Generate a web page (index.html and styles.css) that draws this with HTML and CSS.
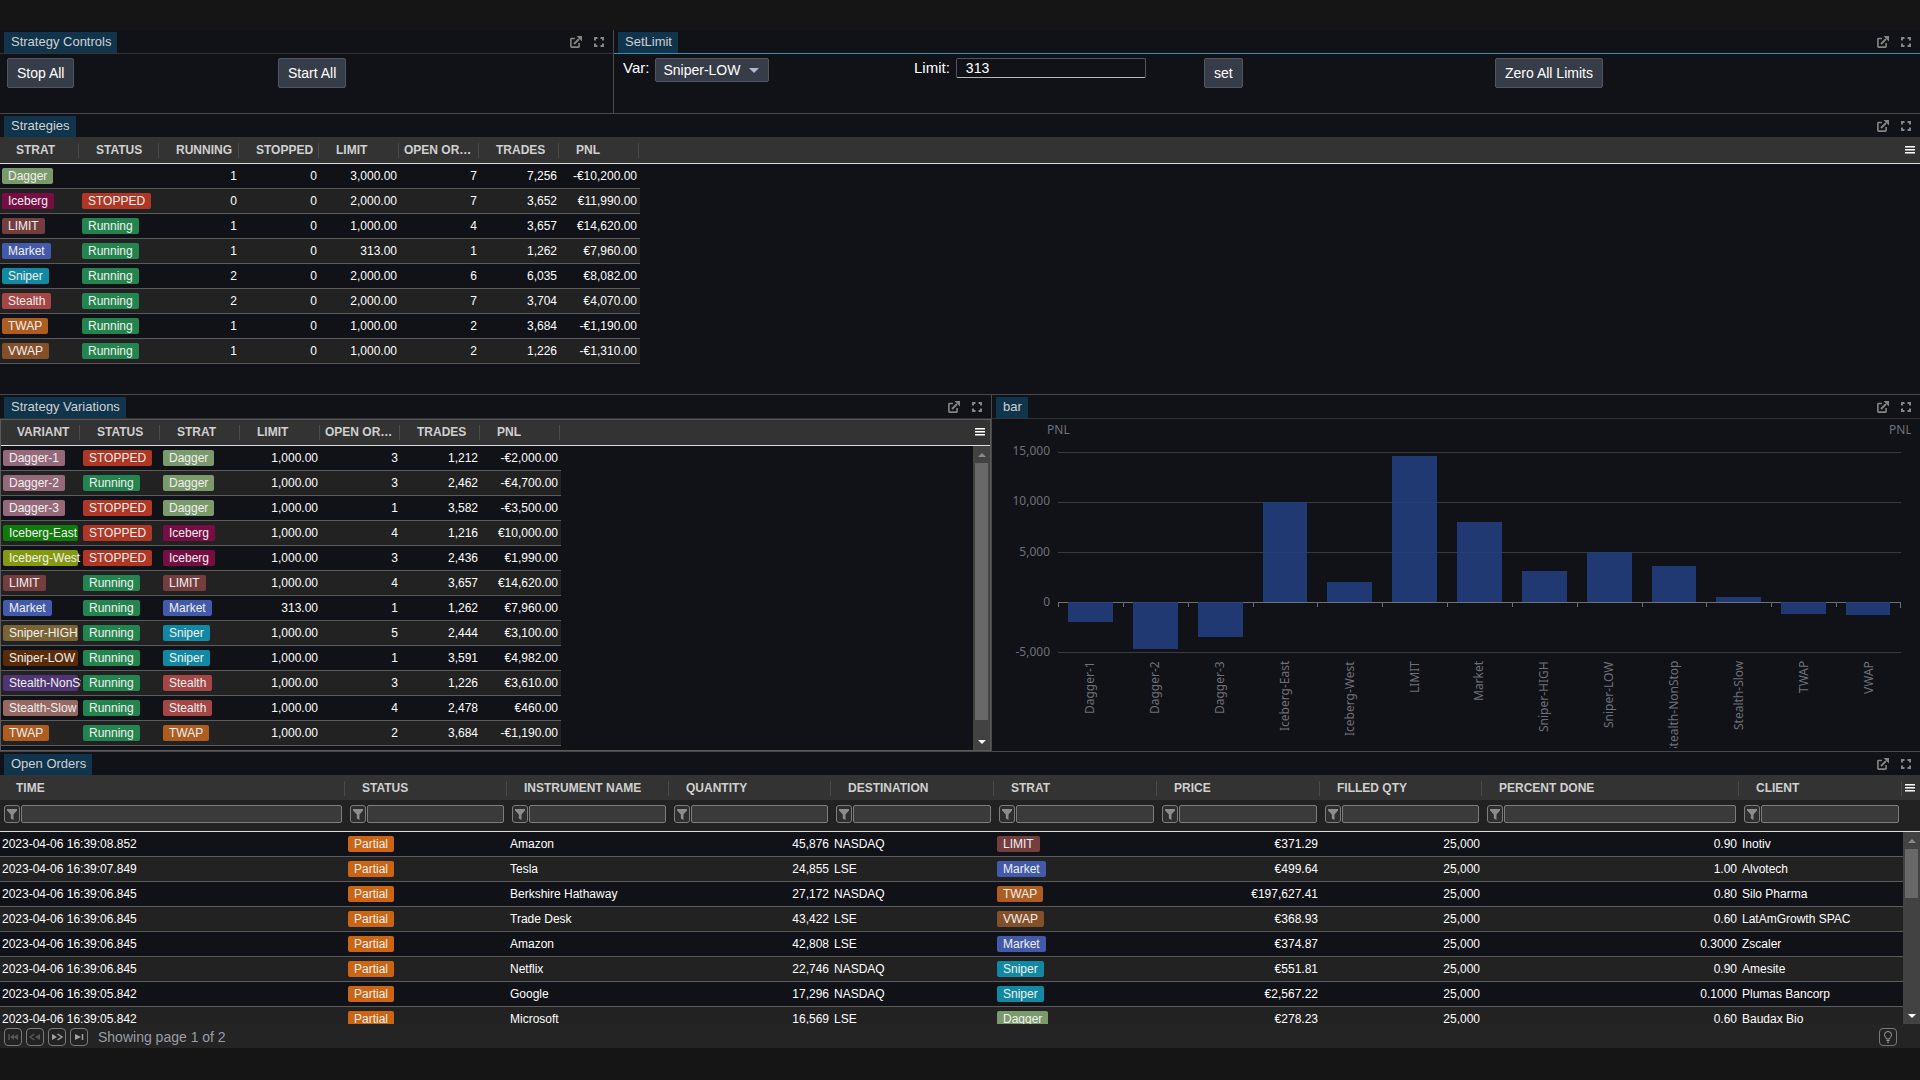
FILE: index.html
```html
<!DOCTYPE html>
<html lang="en">
<head>
<meta charset="utf-8">
<title>Strategy Dashboard</title>
<link rel="stylesheet" href="styles.css">
</head>
<body>
<svg class="sprite" aria-hidden="true">
  <symbol id="popout" viewBox="0 0 12 12"><path d="M5 2.5H1.5a.6.6 0 0 0-.6.6v7.4a.6.6 0 0 0 .6.6h7a.6.6 0 0 0 .6-.6V7" fill="none" stroke="currentColor" stroke-width="1.6"/><path d="M4 8l5-5" fill="none" stroke="currentColor" stroke-width="2"/><path d="M6.5 0H12v5.5z" fill="currentColor"/></symbol>
  <symbol id="expand" viewBox="0 0 12 12"><path d="M2 4.5V2h2.5M7.500 2H10v2.500M10 7.500V10H7.500M4.500 10H2V7.500" fill="none" stroke="currentColor" stroke-width="2"/></symbol>
  <symbol id="bars" viewBox="0 0 10 8"><path d="M0 .5h10M0 3.500h10M0 6.500h10" stroke="#fff"/><path d="M0 1.500h10M0 4.500h10M0 7.500h10" stroke="#a0a0a0"/></symbol>
  <symbol id="funnel" viewBox="0 0 10 11"><path d="M0 0h10v1.500L6.500 5.500V11L3.800 9.500v-4L0 1.500z" fill="currentColor"/></symbol>
  <symbol id="first" viewBox="0 0 12 8"><path d="M2 1v6" stroke="currentColor" stroke-width="1.500"/><path d="M7 1v6L3 4z" fill="currentColor"/><path d="M11 1v6L6.500 4z" fill="currentColor"/></symbol>
  <symbol id="prev" viewBox="0 0 12 8"><path d="M5.500 1L1 4l4.500 3" fill="none" stroke="currentColor" stroke-width="1.500"/><path d="M11 1v6L6 4z" fill="currentColor"/></symbol>
  <symbol id="next" viewBox="0 0 12 8"><path d="M1 1v6l5-3z" fill="currentColor"/><path d="M6.500 1L11 4 6.500 7" fill="none" stroke="currentColor" stroke-width="1.500"/></symbol>
  <symbol id="last" viewBox="0 0 12 8"><path d="M2 1v6l6-3z" fill="currentColor"/><path d="M9.500 1v6" stroke="currentColor" stroke-width="1.500"/></symbol>
  <symbol id="bulb" viewBox="0 0 10 12"><path d="M3.500 8C3.500 6.500 1.500 6 1.500 3.800a3.500 3.300 0 0 1 7 0C8.500 6 6.500 6.500 6.500 8z" fill="none" stroke="currentColor"/><path d="M3.500 9.500h3M4 11.300h2" stroke="currentColor"/></symbol>
</svg>

<main class="app">
  <div class="split split-controls">
    <section class="panel" aria-labelledby="tab-controls">
      <header class="panel-head">
        <h2 class="tab" id="tab-controls">Strategy Controls</h2>
        <div class="tools"><button class="tool" aria-label="Pop out"><svg><use href="#popout"/></svg></button><button class="tool" aria-label="Maximise"><svg><use href="#expand"/></svg></button></div>
      </header>
      <div class="form form-controls">
        <div><button class="btn">Stop All</button></div>
        <div><button class="btn">Start All</button></div>
      </div>
    </section>
    <section class="panel" aria-labelledby="tab-setlimit">
      <header class="panel-head active">
        <h2 class="tab" id="tab-setlimit">SetLimit</h2>
        <div class="tools"><button class="tool" aria-label="Pop out"><svg><use href="#popout"/></svg></button><button class="tool" aria-label="Maximise"><svg><use href="#expand"/></svg></button></div>
      </header>
      <div class="form form-limit">
        <div class="field">
          <label for="var">Var:</label>
          <span class="select"><select id="var"><option>Sniper-LOW</option><option>Sniper-HIGH</option></select></span>
        </div>
        <div class="field">
          <label for="limit">Limit:</label>
          <input class="text" id="limit" type="text" value="313">
        </div>
        <div><button class="btn">set</button></div>
        <div><button class="btn">Zero All Limits</button></div>
      </div>
    </section>
  </div>

  <section class="panel" aria-labelledby="tab-strategies">
    <header class="panel-head">
      <h2 class="tab" id="tab-strategies">Strategies</h2>
      <div class="tools"><button class="tool" aria-label="Pop out"><svg><use href="#popout"/></svg></button><button class="tool" aria-label="Maximise"><svg><use href="#expand"/></svg></button></div>
    </header>
    <div class="grid">
      <table>
        <colgroup><col class="narrow" span="8"><col></colgroup>
        <thead>
          <tr><th>STRAT</th><th>STATUS</th><th>RUNNING</th><th>STOPPED</th><th>LIMIT</th><th class="long">OPEN ORDERS</th><th>TRADES</th><th>PNL</th><th class="menu"><button aria-label="Columns"><svg><use href="#bars"/></svg></button></th></tr>
        </thead>
        <tbody id="strategies"></tbody>
      </table>
    </div>
  </section>

  <div class="split split-middle">
    <section class="panel" aria-labelledby="tab-variations">
      <header class="panel-head">
        <h2 class="tab" id="tab-variations">Strategy Variations</h2>
        <div class="tools"><button class="tool" aria-label="Pop out"><svg><use href="#popout"/></svg></button><button class="tool" aria-label="Maximise"><svg><use href="#expand"/></svg></button></div>
      </header>
      <div class="grid framed">
        <table>
          <colgroup><col class="narrow" span="7"><col></colgroup>
          <thead>
            <tr><th>VARIANT</th><th>STATUS</th><th>STRAT</th><th>LIMIT</th><th class="long">OPEN ORDERS</th><th>TRADES</th><th>PNL</th><th class="menu"><button aria-label="Columns"><svg><use href="#bars"/></svg></button></th></tr>
          </thead>
          <tbody id="variations"></tbody>
        </table>
        <div class="scrollbar" aria-hidden="true"><i class="up"></i><div class="track"><div class="thumb"></div></div><i class="down"></i></div>
      </div>
    </section>
    <section class="panel" aria-labelledby="tab-bar">
      <header class="panel-head">
        <h2 class="tab" id="tab-bar">bar</h2>
        <div class="tools"><button class="tool" aria-label="Pop out"><svg><use href="#popout"/></svg></button><button class="tool" aria-label="Maximise"><svg><use href="#expand"/></svg></button></div>
      </header>
      <div class="chart">
        <div class="axis-names"><span>PNL</span><span>PNL</span></div>
        <div class="y-axis"><span>15,000</span><span>10,000</span><span>5,000</span><span>0</span><span>-5,000</span></div>
        <div class="plot" id="plot"></div>
        <div class="x-axis" id="labels"></div>
      </div>
    </section>
  </div>

  <section class="panel" aria-labelledby="tab-orders">
    <header class="panel-head">
      <h2 class="tab" id="tab-orders">Open Orders</h2>
      <div class="tools"><button class="tool" aria-label="Pop out"><svg><use href="#popout"/></svg></button><button class="tool" aria-label="Maximise"><svg><use href="#expand"/></svg></button></div>
    </header>
    <div class="grid filtered">
      <table>
        <colgroup><col class="time"><col class="mid" span="3"><col class="mid-wide" span="3"><col class="mid"><col class="percent"><col class="mid-wide"><col class="gutter"></colgroup>
        <thead>
          <tr><th>TIME</th><th>STATUS</th><th>INSTRUMENT NAME</th><th>QUANTITY</th><th>DESTINATION</th><th>STRAT</th><th>PRICE</th><th>FILLED QTY</th><th>PERCENT DONE</th><th>CLIENT</th><th class="menu"><button aria-label="Columns"><svg><use href="#bars"/></svg></button></th></tr>
          <tr class="filters" id="filters"></tr>
        </thead>
        <tbody id="orders"></tbody>
      </table>
      <div class="scrollbar" aria-hidden="true"><i class="up"></i><div class="track"><div class="thumb short"></div></div><i class="down"></i></div>
    </div>
    <footer class="pager">
      <button aria-label="First page" disabled><svg><use href="#first"/></svg></button>
      <button aria-label="Previous page" disabled><svg><use href="#prev"/></svg></button>
      <button aria-label="Next page"><svg><use href="#next"/></svg></button>
      <button aria-label="Last page"><svg><use href="#last"/></svg></button>
      <span class="status">Showing page 1 of 2</span>
      <button class="hint" aria-label="Hints"><svg><use href="#bulb"/></svg></button>
    </footer>
  </section>
</main>
<script src="script.js"></script>
</body>
</html>
```

FILE: styles.css
```css
* { box-sizing: border-box; }

body {
  margin: 0;
  background: #151515;
  color: #fff;
  font: 12px/16px "Liberation Sans", Arial, sans-serif;
}

button, input, select { font: inherit; color: inherit; }
button { cursor: pointer; }
.sprite { display: none; }

.app {
  display: grid;
  grid-template-rows: minmax(0, 84fr) minmax(0, 281fr) minmax(0, 357fr) minmax(0, 296fr);
  height: 100vh;
  padding: 30px 0 32px;
}

/* panels */
.split { display: grid; }
.split-controls { grid-template-columns: minmax(0, 614fr) minmax(0, 1306fr); }
.split-middle { grid-template-columns: minmax(0, 992fr) minmax(0, 928fr); }

.panel {
  display: flex;
  flex-direction: column;
  min-width: 0;
  min-height: 0;
  overflow: hidden;
  background: #111217;
  border-bottom: 1px solid #484848;
}
.app > .panel:last-child { border-bottom: 0; }
.split > .panel:first-child { border-right: 1px solid #484848; }

.panel-head {
  display: flex;
  flex: none;
  justify-content: space-between;
  height: 24px;
  padding: 2px 8px 0 4px;
  border-bottom: 1px solid #333;
}
.panel-head.active { border-color: #2f8fae; }

.tab {
  margin: 0;
  padding: 0 6px 0 7px;
  background: #10344c;
  color: #d0d0d0;
  font-size: 13px;
  font-weight: 400;
  line-height: 20px;
}

.tools { display: flex; align-items: center; gap: 11px; padding-bottom: 2px; }
.tool { display: flex; padding: 0; border: 0; background: none; color: #858585; }
.tool svg { width: 12px; height: 12px; }

/* forms */
.form { display: grid; padding: 4px 7px; font-size: 14px; }
.form-controls { grid-template-columns: 271fr 328fr; }
.form-limit { grid-template-columns: 291fr 290fr 291fr 418fr; padding-left: 9px; }
.field { display: flex; align-items: flex-start; gap: 6px; }
.field label { font-size: 15px; line-height: 20px; }

.btn {
  height: 30px;
  padding: 0 9px;
  border: 1px solid #50555f;
  border-radius: 2px;
  background: #373d48;
}

.select { position: relative; }
.select::after {
  content: "";
  position: absolute;
  top: 10px;
  right: 10px;
  border: 5px solid transparent;
  border-top-color: #b9b6d3;
  border-bottom: 0;
  pointer-events: none;
}
.select select {
  width: 114px;
  height: 24px;
  padding: 0 7px;
  border: 1px solid #50555f;
  border-radius: 2px;
  background: #373d48;
  appearance: none;
}

.text {
  width: 190px;
  height: 20px;
  padding: 0 9px;
  border: 1px solid #50555f;
  border-bottom-color: #b8b8b8;
  border-radius: 2px;
  background: #111217;
}

/* data grids */
.grid { position: relative; flex: 1; min-height: 0; overflow: hidden; }
.framed { border: 1px solid #5a5a5a; }

table { width: 100%; table-layout: fixed; border-collapse: separate; border-spacing: 0; }
.narrow { width: 80px; }
.time { width: 346px; }
.mid { width: 162px; }
.mid-wide { width: 163px; }
.percent { width: 257px; }
.gutter { width: 17px; }

th {
  height: 24px;
  padding: 0 4px 0 16px;
  overflow: hidden;
  background: linear-gradient(#4a4a4a, #4a4a4a) no-repeat right 1px center / 1px 15px, #333;
  color: #d0d0d0;
  text-align: left;
  text-overflow: ellipsis;
  white-space: nowrap;
}
th.long { padding: 0 7px 0 4px; }
th.menu { padding: 0 5px 0 0; overflow: visible; background: #333; text-align: right; }
.menu button { padding: 0; border: 0; background: none; line-height: 8px; }
.menu svg { display: block; width: 10px; height: 8px; }
thead tr:last-child > * { height: 26px; padding-bottom: 2px; border-bottom: 1px solid #dcdcdc; }

thead .filters td { height: 32px; padding: 5px 4px 8px 4px; background: #222; vertical-align: top; }
.filter { display: flex; gap: 1px; height: 18px; }
.filter button {
  display: grid;
  flex: none;
  place-items: center;
  width: 16px;
  padding: 0;
  border: 1px solid #7d7d7d;
  border-radius: 3px;
  background: #2e2e2e;
  color: #8c8c8c;
}
.filter svg { width: 10px; height: 11px; }
.filter input {
  flex: 1;
  min-width: 0;
  padding: 0 4px;
  border: 1px solid #7d7d7d;
  border-radius: 2px;
  background: #3a3a3a;
}

tbody td {
  height: 25px;
  padding: 0 3px 0 2px;
  overflow: hidden;
  border-bottom: 1px solid #5c5c5c;
  white-space: nowrap;
}
tbody tr:nth-child(even) td { background: #222; }
tbody tr td.blank { border: 0; background: none; }
.num { text-align: right; }

.badge {
  display: block;
  width: fit-content;
  max-width: 100%;
  height: 16px;
  padding: 0 6px;
  border-radius: 2px;
  color: #f0f0f0;
}
.dagger { background: #7b9a6c; }
.iceberg { background: #760d43; }
.limit { background: #743e3e; }
.market { background: #435aab; }
.sniper { background: #1289a2; }
.stealth { background: #a34645; }
.twap { background: #ad5c22; }
.vwap { background: #84502a; }
.running { background: #24844f; }
.stopped { background: #b03626; }
.partial { background: #cb6514; }
.dagger-1, .dagger-2, .dagger-3 { background: #95697a; }
.iceberg-east { background: #117a0c; }
.iceberg-west { background: #84990e; }
.sniper-high { background: #7a6436; }
.sniper-low { background: #592c09; }
.stealth-nonstop { background: #4f3574; }
.stealth-slow { background: #946963; }

.scrollbar {
  position: absolute;
  inset: 26px 0 0 auto;
  display: flex;
  flex-direction: column;
  align-items: center;
  width: 17px;
  background: #424242;
}
.filtered .scrollbar { top: 56px; }
.scrollbar i { margin: 7px 0 6px; border: 4px solid transparent; }
.scrollbar .up { border-top: 0; border-bottom-color: #8a8a8a; }
.scrollbar .down { border-bottom: 0; border-top-color: #fff; }
.track { flex: 1; width: 13px; }
.thumb { height: 95%; background: #686868; }
.thumb.short { height: 31%; }

/* bar chart */
.chart {
  display: grid;
  flex: 1;
  grid-template: 33px 201px minmax(0, 1fr) / 58px minmax(0, 1fr);
  column-gap: 8px;
  min-height: 0;
  padding-right: 19px;
  overflow: hidden;
  color: #6e7079;
  font: 12px/16px "Noto Sans", sans-serif;
}
.axis-names {
  display: flex;
  grid-column: 1 / -1;
  justify-content: space-between;
  margin-right: -10px;
  padding: 3px 0 0 55px;
  overflow: hidden;
}
.axis-names span:last-child { width: 22px; }
.y-axis {
  display: flex;
  flex-direction: column;
  justify-content: space-between;
  margin: -9px 0 -7px;
  text-align: right;
}
.plot {
  display: grid;
  grid-auto-columns: minmax(0, 1fr);
  grid-auto-flow: column;
  background: repeating-linear-gradient(#3a3a3a 0 1px, transparent 1px 50px);
}
.slot {
  display: grid;
  grid-template-rows: 150px 51px;
  background: linear-gradient(#6e7079, #6e7079) no-repeat 0 150px / 1px 5px,
    linear-gradient(#6e7079, #6e7079) no-repeat 0 150px / 100% 1px;
}
.slot:last-child { border-right: 1px solid transparent; border-image: linear-gradient(transparent 150px, #6e7079 150px 155px, transparent 155px) 1; }
.bar { align-self: end; margin: 0 10px; background: rgba(36, 62, 125, 0.9); }
.bar.negative { grid-row: 2; align-self: start; }
.x-axis {
  display: grid;
  grid-column: 2;
  grid-auto-columns: minmax(0, 1fr);
  grid-auto-flow: column;
  padding: 8px 0 3px;
  overflow: hidden;
}
.x-axis span {
  height: 87px;
  justify-self: center;
  overflow: hidden;
  direction: rtl;
  text-align: right;
  white-space: nowrap;
  writing-mode: vertical-rl;
  transform: rotate(180deg);
}

/* pager */
.pager {
  display: flex;
  flex: none;
  align-items: center;
  gap: 4px;
  height: 24px;
  padding: 2px 23px 0 4px;
  background: #242424;
  color: #999da6;
  font-size: 14px;
}
.pager button {
  display: grid;
  place-items: center;
  width: 18px;
  height: 18px;
  padding: 0;
  border: 1px solid #7a7a7a;
  border-radius: 4px;
  background: #222;
  color: #a0a0a0;
}
.pager button:disabled { color: #555; }
.pager svg { width: 12px; height: 8px; }
.pager .hint svg { width: 10px; height: 12px; }
.status { flex: 1; padding-left: 6px; }
```

FILE: script.js
```js
const strategies = [
  ["Dagger", "", "1", "0", "3,000.00", "7", "7,256", "-€10,200.00"],
  ["Iceberg", "STOPPED", "0", "0", "2,000.00", "7", "3,652", "€11,990.00"],
  ["LIMIT", "Running", "1", "0", "1,000.00", "4", "3,657", "€14,620.00"],
  ["Market", "Running", "1", "0", "313.00", "1", "1,262", "€7,960.00"],
  ["Sniper", "Running", "2", "0", "2,000.00", "6", "6,035", "€8,082.00"],
  ["Stealth", "Running", "2", "0", "2,000.00", "7", "3,704", "€4,070.00"],
  ["TWAP", "Running", "1", "0", "1,000.00", "2", "3,684", "-€1,190.00"],
  ["VWAP", "Running", "1", "0", "1,000.00", "2", "1,226", "-€1,310.00"]
];

const variations = [
  ["Dagger-1", "STOPPED", "Dagger", "1,000.00", "3", "1,212", "-€2,000.00"],
  ["Dagger-2", "Running", "Dagger", "1,000.00", "3", "2,462", "-€4,700.00"],
  ["Dagger-3", "STOPPED", "Dagger", "1,000.00", "1", "3,582", "-€3,500.00"],
  ["Iceberg-East", "STOPPED", "Iceberg", "1,000.00", "4", "1,216", "€10,000.00"],
  ["Iceberg-West", "STOPPED", "Iceberg", "1,000.00", "3", "2,436", "€1,990.00"],
  ["LIMIT", "Running", "LIMIT", "1,000.00", "4", "3,657", "€14,620.00"],
  ["Market", "Running", "Market", "313.00", "1", "1,262", "€7,960.00"],
  ["Sniper-HIGH", "Running", "Sniper", "1,000.00", "5", "2,444", "€3,100.00"],
  ["Sniper-LOW", "Running", "Sniper", "1,000.00", "1", "3,591", "€4,982.00"],
  ["Stealth-NonStop", "Running", "Stealth", "1,000.00", "3", "1,226", "€3,610.00"],
  ["Stealth-Slow", "Running", "Stealth", "1,000.00", "4", "2,478", "€460.00"],
  ["TWAP", "Running", "TWAP", "1,000.00", "2", "3,684", "-€1,190.00"]
];

const orders = [
  ["2023-04-06 16:39:08.852", "Partial", "Amazon", "45,876", "NASDAQ", "LIMIT", "€371.29", "25,000", "0.90", "Inotiv"],
  ["2023-04-06 16:39:07.849", "Partial", "Tesla", "24,855", "LSE", "Market", "€499.64", "25,000", "1.00", "Alvotech"],
  ["2023-04-06 16:39:06.845", "Partial", "Berkshire Hathaway", "27,172", "NASDAQ", "TWAP", "€197,627.41", "25,000", "0.80", "Silo Pharma"],
  ["2023-04-06 16:39:06.845", "Partial", "Trade Desk", "43,422", "LSE", "VWAP", "€368.93", "25,000", "0.60", "LatAmGrowth SPAC"],
  ["2023-04-06 16:39:06.845", "Partial", "Amazon", "42,808", "LSE", "Market", "€374.87", "25,000", "0.3000", "Zscaler"],
  ["2023-04-06 16:39:06.845", "Partial", "Netflix", "22,746", "NASDAQ", "Sniper", "€551.81", "25,000", "0.90", "Amesite"],
  ["2023-04-06 16:39:05.842", "Partial", "Google", "17,296", "NASDAQ", "Sniper", "€2,567.22", "25,000", "0.1000", "Plumas Bancorp"],
  ["2023-04-06 16:39:05.842", "Partial", "Microsoft", "16,569", "LSE", "Dagger", "€278.23", "25,000", "0.60", "Baudax Bio"]
];

const pnl = [
  ["Dagger-1", -2000], ["Dagger-2", -4700], ["Dagger-3", -3500],
  ["Iceberg-East", 10000], ["Iceberg-West", 1990], ["LIMIT", 14620],
  ["Market", 7960], ["Sniper-HIGH", 3100], ["Sniper-LOW", 4982],
  ["Stealth-NonStop", 3610], ["Stealth-Slow", 460], ["TWAP", -1190], ["VWAP", -1310]
];

// kinds: b = badge, n = number, t = text
function fill(id, rows, kinds) {
  document.getElementById(id).innerHTML = rows.map(row =>
    "<tr>" + row.map((value, i) => {
      if (kinds[i] === "b" && value) {
        return `<td><span class="badge ${value.toLowerCase()}">${value}</span></td>`;
      }
      return `<td${kinds[i] === "n" ? ' class="num"' : ""}>${value}</td>`;
    }).join("") + '<td class="blank"></td></tr>'
  ).join("");
}

fill("strategies", strategies, "bbnnnnnn");
fill("variations", variations, "bbbnnnn");
fill("orders", orders, "tbtntbnnnt");

const columns = ["Time", "Status", "Instrument name", "Quantity", "Destination", "Strat", "Price", "Filled qty", "Percent done", "Client"];
document.getElementById("filters").innerHTML = columns.map(name =>
  `<td><div class="filter"><button aria-label="${name} filter options"><svg><use href="#funnel"/></svg></button><input type="text" aria-label="Filter ${name}"></div></td>`
).join("") + "<td></td>";

// 1 pixel of bar height per 100 of PNL
document.getElementById("plot").innerHTML = pnl.map(([, value]) =>
  `<div class="slot"><div class="bar${value < 0 ? " negative" : ""}" style="height:${Math.round(Math.abs(value) / 100)}px"></div></div>`
).join("");
document.getElementById("labels").innerHTML = pnl.map(([name]) => `<span>${name}</span>`).join("");
```
